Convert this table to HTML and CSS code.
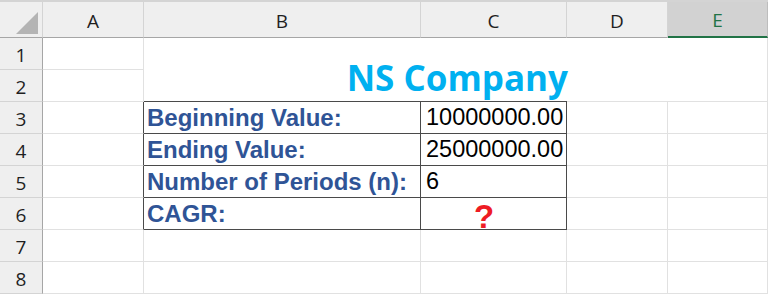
FILE: index.html
```html
<!DOCTYPE html>
<html>
<head>
<meta charset="utf-8">
<link rel="stylesheet" href="styles.css">
</head>
<body>
<div class="sheet">
  <div class="hd corner"><span class="tri"></span></div>
  <div class="hd col">A</div>
  <div class="hd col">B</div>
  <div class="hd col">C</div>
  <div class="hd col">D</div>
  <div class="hd col sel">E</div>

  <div class="hd rn">1</div>
  <div class="c"></div>
  <div class="c title-cell"><span class="title">NS Company</span></div>
  <div class="c blank-merge"></div>

  <div class="hd rn">2</div>
  <div class="c"></div>

  <div class="hd rn">3</div>
  <div class="c tl"></div>
  <div class="c t lbl">Beginning Value:</div>
  <div class="c t val">10000000.00</div>
  <div class="c"></div>
  <div class="c"></div>

  <div class="hd rn">4</div>
  <div class="c tl"></div>
  <div class="c t lbl">Ending Value:</div>
  <div class="c t val">25000000.00</div>
  <div class="c"></div>
  <div class="c"></div>

  <div class="hd rn">5</div>
  <div class="c tl"></div>
  <div class="c t lbl">Number of Periods (n):</div>
  <div class="c t val">6</div>
  <div class="c"></div>
  <div class="c"></div>

  <div class="hd rn">6</div>
  <div class="c tl"></div>
  <div class="c t lbl">CAGR:</div>
  <div class="c t q"><span class="qm">?</span></div>
  <div class="c"></div>
  <div class="c"></div>

  <div class="hd rn">7</div>
  <div class="c"></div>
  <div class="c"></div>
  <div class="c"></div>
  <div class="c"></div>
  <div class="c"></div>

  <div class="hd rn">8</div>
  <div class="c"></div>
  <div class="c"></div>
  <div class="c"></div>
  <div class="c"></div>
  <div class="c"></div>
</div>
</body>
</html>
```
FILE: styles.css
```css
* { box-sizing: border-box; }
html, body { margin: 0; padding: 0; background: #fff; }
body { width: 768px; height: 294px; overflow: hidden; }

.sheet {
  display: grid;
  grid-template-columns: 43px 101px 277px 146px 101px 100px;
  grid-template-rows: 36px repeat(8, 32px);
  border-top: 2px solid #d4d4d4;
  font-family: "Liberation Sans", Arial, sans-serif;
}

.hd {
  background: #efefef;
  color: #1f1f1f;
  font-family: "Open Sans", "Liberation Sans", sans-serif;
  font-size: 19px;
  display: flex;
  justify-content: center;
  align-items: center;
}
.col {
  border-right: 1px solid #d4d4d4;
  border-bottom: 1px solid #a6a6a6;
  padding-top: 2px;
}
.col.sel {
  background: #d2d2d2;
  color: #217346;
  border-bottom: 2px solid #217346;
  border-right: 1px solid #bdbdbd;
}
.corner {
  border-right: 1px solid #d4d4d4;
  border-bottom: 1px solid #a6a6a6;
  position: relative;
}
.tri {
  position: absolute;
  right: 4px;
  bottom: 3px;
  width: 0;
  height: 0;
  border-left: 22px solid transparent;
  border-bottom: 22px solid #b4b4b4;
}
.rn {
  border-right: 1px solid #a6a6a6;
  border-bottom: 1px solid #d4d4d4;
  padding-top: 3px;
}

.c {
  border-right: 1px solid #e1e1e1;
  border-bottom: 1px solid #e1e1e1;
  white-space: nowrap;
  overflow: visible;
}
.title-cell {
  grid-column: 3 / 5;
  grid-row: 2 / 4;
  border-right: none;
  border-bottom: 1px solid #4a4a4a;
  display: flex;
  justify-content: flex-end;
  align-items: flex-end;
  padding-bottom: 5px;
}
.title {
  font-family: "Open Sans", "Liberation Sans", sans-serif;
  font-weight: 700;
  font-size: 35px;
  line-height: 36px;
  color: #00b0f0;
  margin-right: -1px;
}
.blank-merge {
  grid-column: 5 / 7;
  grid-row: 2 / 4;
}
.tl { border-right-color: #4a4a4a; }
.t {
  border-right: 1px solid #4a4a4a;
  border-bottom: 1px solid #4a4a4a;
  font-size: 24px;
  line-height: 31px;
  padding: 0 3px;
}
.lbl { color: #2f5496; font-weight: 700; }
.val { color: #000; padding-left: 5px; font-size: 23.5px; }
.q { text-align: center; padding-right: 22px; }
.qm {
  display: inline-block;
  color: #ee1c24;
  font-weight: 700;
  font-size: 33px;
  line-height: 28px;
  padding-top: 5px;
}
```
